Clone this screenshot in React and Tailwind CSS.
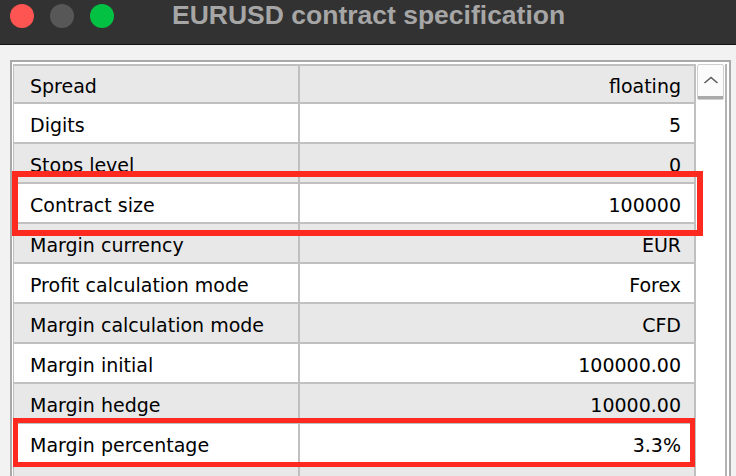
const ROWS = [
  ["Spread", "floating"],
  ["Digits", "5"],
  ["Stops level", "0"],
  ["Contract size", "100000"],
  ["Margin currency", "EUR"],
  ["Profit calculation mode", "Forex"],
  ["Margin calculation mode", "CFD"],
  ["Margin initial", "100000.00"],
  ["Margin hedge", "10000.00"],
  ["Margin percentage", "3.3%"],
  ["", ""],
];

function Row({ label, value, index }) {
  const bg = index % 2 === 0 ? "bg-[#e8e8e8]" : "bg-white";
  const h = index === 0 ? "h-[38px]" : "h-[40px]";
  return (
    <div className={`flex ${h} ${bg} border-b-2 border-[#c0c0c0] shrink-0`}>
      <div className="w-[286px] border-r-2 border-[#c0c0c0] flex items-center pl-[16px] pt-[5px]">
        {label}
      </div>
      <div className="flex-1 flex items-center justify-end pr-[13px] pt-[5px]">{value}</div>
    </div>
  );
}

export default function App() {
  return (
    <div className="relative w-[736px] h-[476px] overflow-hidden bg-[#f2f2f2]">
      {/* Title bar */}
      <div className="h-[45px] bg-[#323232] border-b border-[#151515] flex items-start">
        <div className="flex gap-[16px] pl-[10px] pt-[4px]">
          <span className="w-6 h-6 rounded-full bg-[#fe5552]" />
          <span className="w-6 h-6 rounded-full bg-[#575757]" />
          <span className="w-6 h-6 rounded-full bg-[#03c143]" />
        </div>
        <div
          className="ml-[58px] mt-[2px] leading-none text-[26.5px] font-bold text-[#a6a6a6]"
          style={{ fontFamily: '"Liberation Sans", Arial, sans-serif' }}
        >
          EURUSD contract specification
        </div>
      </div>

      {/* Spec frame */}
      <div className="pt-[15px] pl-[10px]">
        <div className="w-[721px] h-[420px] border-2 border-b-0 border-[#a9a9a9] bg-white pt-[2px] pl-px pr-[2px] flex">
          <div
            className="w-[683px] border-l border-t-2 border-r-2 border-[#c0c0c0] flex flex-col text-[19px] text-black"
            style={{ fontFamily: '"DejaVu Sans", Verdana, sans-serif' }}
          >
            {ROWS.map(([label, value], i) => (
              <Row key={i} label={label} value={value} index={i} />
            ))}
          </div>
          <div className="w-[31px] border-r-2 border-[#b4b4b4] flex flex-col">
            <div className="h-[36px] mx-px border border-[#cfcfcf] rounded-[2px] bg-[#fbfbfb] flex flex-col">
              <div className="flex-1 flex items-center justify-center pb-[2px]">
                <svg width="16" height="8" viewBox="0 0 16 8">
                  <polyline points="1.5,7 8,1.5 14.5,7" fill="none" stroke="#5a5a5a" strokeWidth="1.5" />
                </svg>
              </div>
              <div className="h-[3px] bg-[#a9a9a9]" />
            </div>
          </div>
        </div>
      </div>

      {/* Highlight boxes */}
      <div className="absolute left-[12px] top-[171px] w-[691px] h-[65px] border-[6px] border-[#ff2a1f]" />
      <div className="absolute left-[13px] top-[418px] w-[682px] h-[49px] border-[5px] border-[#ff2a1f]" />
    </div>
  );
}
